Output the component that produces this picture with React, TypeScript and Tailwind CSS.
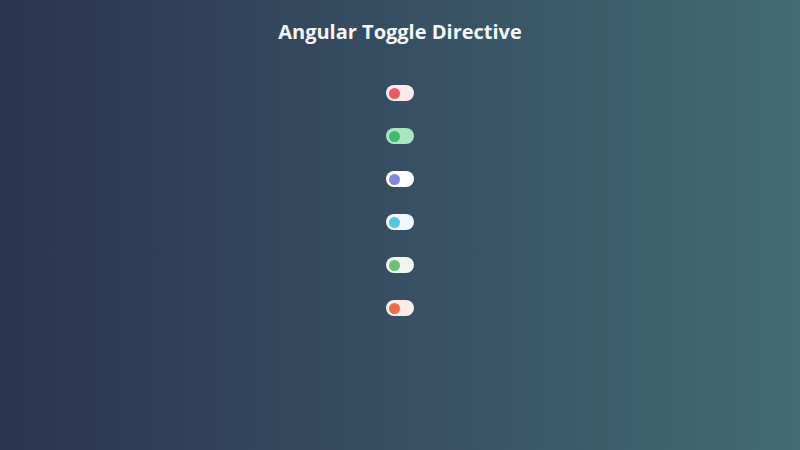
import React from 'react';

const toggles = [
  { id: 'red', track: 'bg-[#fce9ea]', knob: 'bg-[#e85a66]' },
  { id: 'green', track: 'bg-[#a9e6c0]', knob: 'bg-[#3cbd6c]' },
  { id: 'blue', track: 'bg-[#ffffff]', knob: 'bg-[#8088dc]' },
  { id: 'cyan', track: 'bg-[#f0f9fc]', knob: 'bg-[#55c6e2]' },
  { id: 'lime', track: 'bg-[#eef6ef]', knob: 'bg-[#6fc074]' },
  { id: 'orange', track: 'bg-[#fdebe5]', knob: 'bg-[#ef6c46]' },
];

const Toggle: React.FC<{ track: string; knob: string }> = ({ track, knob }) => (
  <button className={`w-[28px] h-[16px] rounded-full ${track} flex items-center px-[3px]`}>
    <span className={`w-[11px] h-[11px] rounded-full ${knob}`} />
  </button>
);

const App: React.FC = () => {
  return (
    <div
      className="w-[800px] h-[450px] bg-gradient-to-r from-[#2b3450] to-[#436b74] flex flex-col items-center"
      style={{ fontFamily: '"Open Sans", sans-serif' }}
    >
      <h1 className="mt-[18px] text-[20px] leading-[28px] font-bold text-[#f4f6f8]">Angular Toggle Directive</h1>
      <div className="mt-[39px] flex flex-col items-center gap-[27px]">
        {toggles.map((t) => (
          <Toggle key={t.id} track={t.track} knob={t.knob} />
        ))}
      </div>
    </div>
  );
};

export default App;
